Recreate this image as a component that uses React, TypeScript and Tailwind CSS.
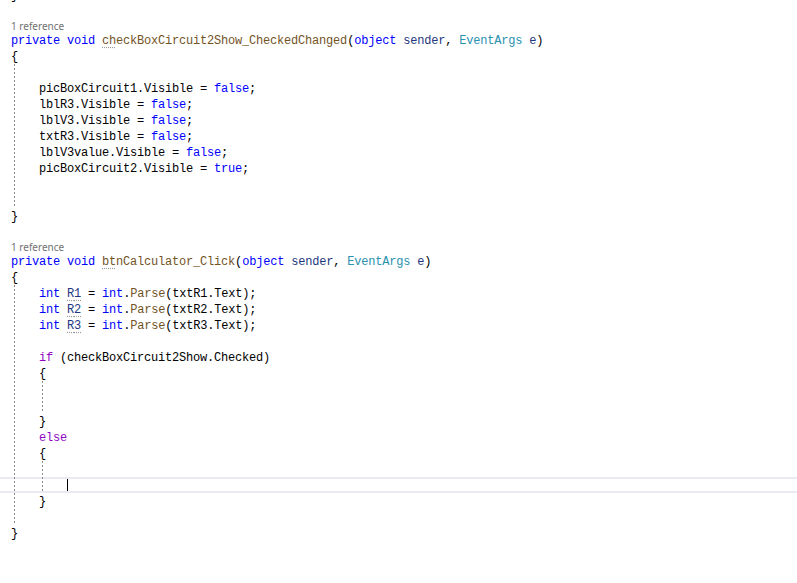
import type { ReactNode } from "react";

const KW = "text-[#0000ff]";
const CTRL = "text-[#8f08c4]";
const METHOD = "text-[#74531f]";
const TYPE = "text-[#2b91af]";
const LOCAL = "text-[#1f377f]";

function Line({ children }: { children?: ReactNode }) {
  return <div className="h-4 leading-[18px] whitespace-pre pl-[11px]">{children ?? " "}</div>;
}

function Lens() {
  return (
    <div className="h-[13px] leading-[14px] pl-[11px] text-[10px] text-[#717171] font-['Noto_Sans','Liberation_Sans',sans-serif] tracking-normal">
      1 reference
    </div>
  );
}

function Dots({ children }: { children: ReactNode }) {
  return (
    <span className="underline decoration-dotted decoration-[#9a9a9a] underline-offset-[3px]">
      {children}
    </span>
  );
}

function Guide({ left, children }: { left: "outer" | "inner"; children: ReactNode }) {
  return (
    <div className="relative">
      {children}
      <span
        className={
          (left === "outer" ? "left-[14px] " : "left-[42px] ") +
          "absolute top-0 bottom-0 w-px bg-[repeating-linear-gradient(to_bottom,#8a8a8a_0px,#8a8a8a_2px,transparent_2px,transparent_4px)]"
        }
      />
    </div>
  );
}

function Signature({ name }: { name: string }) {
  return (
    <Line>
      <span className={KW}>private</span> <span className={KW}>void</span>{" "}
      <span className={METHOD}>
        <Dots>{name.slice(0, 2)}</Dots>
        {name.slice(2)}
      </span>
      (<span className={KW}>object</span> <span className={LOCAL}>sender</span>,{" "}
      <span className={TYPE}>EventArgs</span> <span className={LOCAL}>e</span>)
    </Line>
  );
}

function Assign({ target, value }: { target: string; value: string }) {
  return (
    <Line>
      {"    "}
      {target}.Visible = <span className={KW}>{value}</span>;
    </Line>
  );
}

function Parse({ n }: { n: string }) {
  return (
    <Line>
      {"    "}
      <span className={KW}>int</span>{" "}
      <span className={LOCAL}>
        <Dots>R{n}</Dots>
      </span>{" "}
      = <span className={KW}>int</span>.<span className={METHOD}>Parse</span>(txtR{n}.Text);
    </Line>
  );
}

export default function App() {
  return (
    <div className="w-full h-[583px] overflow-hidden bg-white text-black">
      <div className="-mt-[13px] font-['Liberation_Mono','DejaVu_Sans_Mono',monospace] text-[12px] tracking-[-0.2px]">
        <Line>{"}"}</Line>
        <Line />
        <Lens />
        <Signature name="checkBoxCircuit2Show_CheckedChanged" />
        <Line>{"{"}</Line>
        <Guide left="outer">
          <Line />
          <Assign target="picBoxCircuit1" value="false" />
          <Assign target="lblR3" value="false" />
          <Assign target="lblV3" value="false" />
          <Assign target="txtR3" value="false" />
          <Assign target="lblV3value" value="false" />
          <Assign target="picBoxCircuit2" value="true" />
          <Line />
          <Line />
        </Guide>
        <Line>{"}"}</Line>
        <Line />
        <Lens />
        <Signature name="btnCalculator_Click" />
        <Line>{"{"}</Line>
        <Guide left="outer">
          <Parse n="1" />
          <Parse n="2" />
          <Parse n="3" />
          <Line />
          <Line>
            {"    "}
            <span className={CTRL}>if</span> (checkBoxCircuit2Show.Checked)
          </Line>
          <Line>{"    {"}</Line>
          <Guide left="inner">
            <Line />
            <Line />
          </Guide>
          <Line>{"    }"}</Line>
          <Line>
            {"    "}
            <span className={CTRL}>else</span>
          </Line>
          <Line>{"    {"}</Line>
          <Guide left="inner">
            <Line />
            <div className="h-4 w-full border-y-2 border-[#eaeaf2] pl-[67px]">
              <div className="w-px h-3 bg-black" />
            </div>
          </Guide>
          <Line>{"    }"}</Line>
          <Line />
        </Guide>
        <Line>{"}"}</Line>
        <Line />
        <Line />
        <Line />
      </div>
    </div>
  );
}
